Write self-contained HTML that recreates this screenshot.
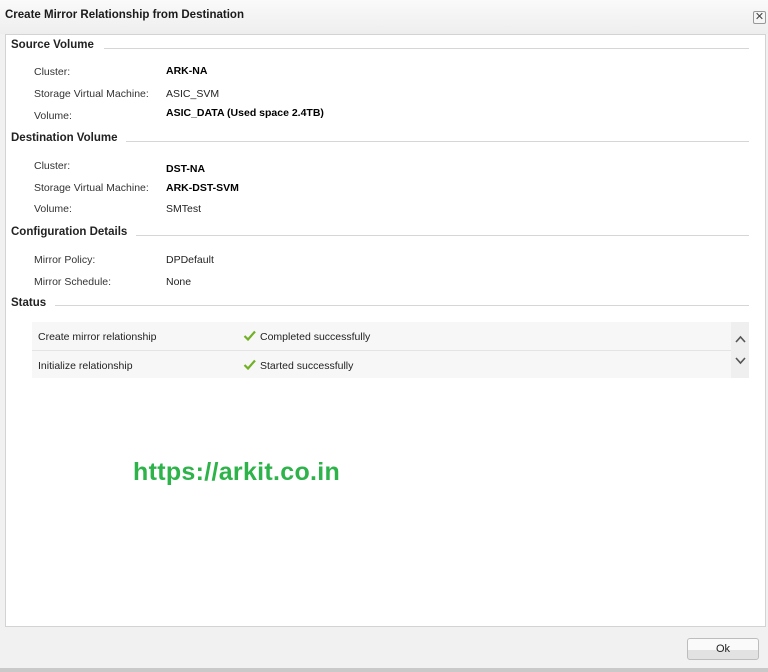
<!DOCTYPE html>
<html><head><style>
body{margin:0;width:768px;height:672px;background:#f1f1f1;font-family:"Liberation Sans",Arial,sans-serif;position:relative;overflow:hidden;color:#222}
.t{position:absolute;white-space:nowrap}
.title{left:5px;top:9px;font-size:11.5px;font-weight:bold;color:#1a1a1a}
.panel{position:absolute;left:5px;top:34px;width:759px;height:591px;background:#fff;border:1px solid #d3d3d3}
.h{font-size:11.5px;font-weight:bold;color:#222}
.line{position:absolute;height:1px;background:#d6d6d6}
.l{font-size:10.5px;color:#333}
.v{font-size:10.5px;color:#222}
.b{font-weight:bold;color:#000}
</style></head><body>
<div style="position:absolute;left:0;top:0;width:768px;height:34px;background:linear-gradient(#fafafa,#eeeeee)"></div>
<div class="t title">Create Mirror Relationship from Destination</div>
<div style="position:absolute;left:753px;top:11px;width:11px;height:11px;border:1px solid #999;border-radius:2px;background:#f6f6f6;font-size:11px;line-height:11px;text-align:center;color:#444">✕</div>
<div class="panel"></div>

<div class="t h" style="left:11px;top:39px">Source Volume</div>
<div class="line" style="left:104px;top:48px;width:645px"></div>
<div class="t l" style="left:34px;top:66px">Cluster:</div><div class="t v b" style="left:166px;top:65px">ARK-NA</div>
<div class="t l" style="left:34px;top:88px">Storage Virtual Machine:</div><div class="t v" style="left:166px;top:88px">ASIC_SVM</div>
<div class="t l" style="left:34px;top:110px">Volume:</div><div class="t v b" style="left:166px;top:107px">ASIC_DATA (Used space 2.4TB)</div>

<div class="t h" style="left:11px;top:132px">Destination Volume</div>
<div class="line" style="left:126px;top:141px;width:623px"></div>
<div class="t l" style="left:34px;top:160px">Cluster:</div><div class="t v b" style="left:166px;top:163px">DST-NA</div>
<div class="t l" style="left:34px;top:182px">Storage Virtual Machine:</div><div class="t v b" style="left:166px;top:182px">ARK-DST-SVM</div>
<div class="t l" style="left:34px;top:203px">Volume:</div><div class="t v" style="left:166px;top:203px">SMTest</div>

<div class="t h" style="left:11px;top:226px">Configuration Details</div>
<div class="line" style="left:136px;top:235px;width:613px"></div>
<div class="t l" style="left:34px;top:254px">Mirror Policy:</div><div class="t v" style="left:166px;top:254px">DPDefault</div>
<div class="t l" style="left:34px;top:276px">Mirror Schedule:</div><div class="t v" style="left:166px;top:276px">None</div>

<div class="t h" style="left:11px;top:297px">Status</div>
<div class="line" style="left:55px;top:305px;width:694px"></div>
<div style="position:absolute;left:32px;top:322px;width:717px;height:56px;background:#f7f7f7"></div>
<div style="position:absolute;left:32px;top:350px;width:699px;height:1px;background:#e4e4e4"></div>
<div style="position:absolute;left:731px;top:322px;width:18px;height:56px;background:#efefef"></div>
<div class="t l" style="left:38px;top:331px;color:#222">Create mirror relationship</div>
<svg style="position:absolute;left:243px;top:330px" width="13" height="11"><path d="M1.5 6 L5 9.5 L12 1.5" fill="none" stroke="#72b026" stroke-width="2.2"/></svg>
<div class="t l" style="left:260px;top:331px;color:#222">Completed successfully</div>
<div class="t l" style="left:38px;top:360px;color:#222">Initialize relationship</div>
<svg style="position:absolute;left:243px;top:359px" width="13" height="11"><path d="M1.5 6 L5 9.5 L12 1.5" fill="none" stroke="#72b026" stroke-width="2.2"/></svg>
<div class="t l" style="left:260px;top:360px;color:#222">Started successfully</div>
<svg style="position:absolute;left:734px;top:333px" width="13" height="36"><path d="M2 9 L6.5 4 L11 9 M2 25 L6.5 30 L11 25" fill="none" stroke="#555" stroke-width="1.6"/></svg>

<div class="t" style="left:133px;top:458px;font-size:25px;font-weight:bold;color:#2db34a;letter-spacing:0.3px">https://arkit.co.in</div>

<div style="position:absolute;left:687px;top:638px;width:70px;height:20px;border:1px solid #bdbdbd;border-radius:3px;background:linear-gradient(#fafafa 55%,#e2e2e2 55%);font-size:11px;text-align:center;line-height:21px;color:#222">Ok</div>
<div style="position:absolute;left:0;top:668px;width:768px;height:4px;background:#c9c9c9"></div>
</body></html>
